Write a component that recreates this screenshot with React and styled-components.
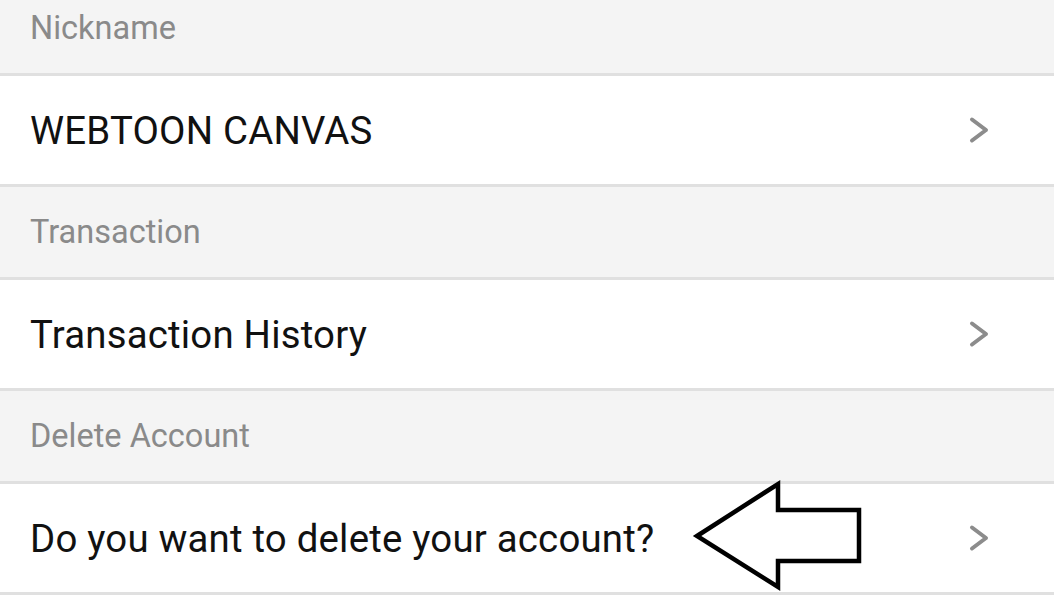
import React from 'react';
import styled, { createGlobalStyle } from 'styled-components';

const GlobalStyle = createGlobalStyle`
    html, body {
        margin: 0;
        padding: 0;
        background: #ffffff;
        overflow: hidden;
    }
    body {
        font-family: Roboto, "Liberation Sans", Arial, sans-serif;
    }
`;

const List = styled.div`
    display: flex;
    flex-direction: column;
    width: 1054px;
    height: 613px;
    background: #ffffff;
`;

const SectionHeader = styled.div`
    display: flex;
    align-items: center;
    height: 90px;
    flex-shrink: 0;
    padding-left: 30px;
    margin-top: ${(p) => (p.$first ? '-17px' : '0')};
    background: #f4f4f4;
    border-bottom: 3px solid #e0e0e0;
    color: #8a8a8a;
    font-size: 32.5px;
`;

const Row = styled.div`
    position: relative;
    display: flex;
    align-items: center;
    justify-content: space-between;
    height: 108px;
    flex-shrink: 0;
    padding: 0 63px 0 30px;
    background: #ffffff;
    border-bottom: 3px solid #e0e0e0;
    color: #111111;
    font-size: 38.4px;
`;

const Label = styled.span`
    letter-spacing: 0.2px;
`;

const Chevron = styled.svg`
    width: 24px;
    height: 32px;
    flex-shrink: 0;
`;

// hand drawn pointer over the last row
const Pointer = styled.svg`
    position: absolute;
    left: 690px;
    top: -6px;
    width: 180px;
    height: 116px;
    pointer-events: none;
`;

function ChevronIcon() {
    return (
        <Chevron viewBox="0 0 24 32">
            <path d="M5 5.5 L19 16 L5 26.5" fill="none" stroke="#8c8c8c" strokeWidth="4" strokeLinecap="round" strokeLinejoin="round" />
        </Chevron>
    );
}

function SettingRow({ label, children }) {
    return (
        <Row>
            <Label>{label}</Label>
            {children}
            <ChevronIcon />
        </Row>
    );
}

export default function App() {
    return (
        <>
            <GlobalStyle />
            <List>
                <SectionHeader $first>Nickname</SectionHeader>
                <SettingRow label="WEBTOON CANVAS" />
                <SectionHeader>Transaction</SectionHeader>
                <SettingRow label="Transaction History" />
                <SectionHeader>Delete Account</SectionHeader>
                <SettingRow label="Do you want to delete your account?">
                    <Pointer viewBox="0 0 180 116">
                        <polygon
                            points="7,58 88,6 88,32 169,32 169,83 88,83 88,109"
                            fill="none"
                            stroke="#000000"
                            strokeWidth="4.5"
                            strokeLinejoin="miter"
                        />
                    </Pointer>
                </SettingRow>
            </List>
        </>
    );
}
